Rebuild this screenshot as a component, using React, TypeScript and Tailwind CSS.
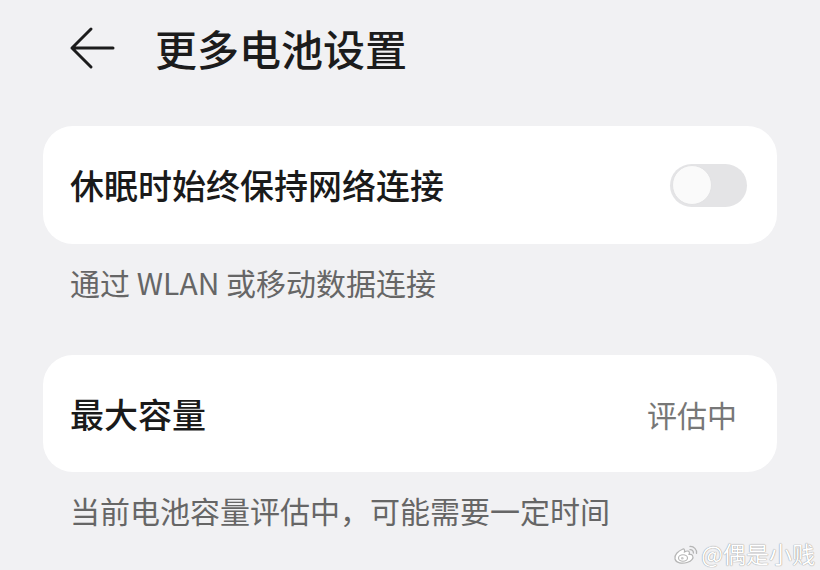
import React from "react";

function BackArrow() {
  return (
    <svg width="46" height="44" viewBox="0 0 46 44" fill="none">
      <path d="M3 22H44M3 22L22 3M3 22L22 41" stroke="#1c1c1c" strokeWidth="3" strokeLinecap="round" strokeLinejoin="round" />
    </svg>
  );
}

function Toggle() {
  return (
    <div className="w-[77px] h-[43px] rounded-full bg-[#e4e4e6] flex items-center px-[1.5px]">
      <div className="w-[40px] h-[40px] rounded-full bg-[#fafafa] border-[1.5px] border-[#e2e2e4]" />
    </div>
  );
}

function WeiboLogo() {
  return (
    <svg width="26" height="22" viewBox="0 0 26 22" fill="none">
      <path d="M10 6C5 8 1 12 2 16c1 4 7 5 12 3.5S21 15 19.5 12.5C18.5 11 16.5 11.5 16 11.5c.8-1.8.5-3.5-1.5-3.5-1.2 0-2.5.6-3 .9.3-1.6-.2-3.4-1.5-2.9Z" fill="#fff" stroke="#b5b5b5" strokeWidth="1.2" />
      <ellipse cx="10" cy="15" rx="4.5" ry="3.3" fill="#fff" stroke="#b5b5b5" strokeWidth="1.1" />
      <circle cx="9.3" cy="15.3" r="1.3" fill="#c8c8c8" />
      <path d="M17 3.5a6 6 0 0 1 6.5 6.8M17 6.6a3 3 0 0 1 3.4 3.4" stroke="#b5b5b5" strokeWidth="1.3" strokeLinecap="round" />
    </svg>
  );
}

export default function App() {
  return (
    <div
      className="relative w-[820px] h-[570px] overflow-hidden bg-[#f1f1f3]"
      style={{ fontFamily: '"Noto Sans CJK SC", "Noto Sans", sans-serif' }}
    >
      <div className="flex items-center h-[96px] pl-[69px]">
        <BackArrow />
        <div className="ml-[40px] text-[42px] leading-none font-medium text-[#1c1c1c]">更多电池设置</div>
      </div>

      <div className="mt-[30px] mx-[43px] h-[118px] rounded-[30px] bg-white flex items-center justify-between pl-[27px] pr-[30px]">
        <div className="text-[34px] leading-none font-medium text-[#1a1a1a]">休眠时始终保持网络连接</div>
        <Toggle />
      </div>

      <div className="pl-[70px] pt-[18px] h-[111px]">
        <div className="text-[30px] leading-[40px] text-[#666666]">通过 WLAN 或移动数据连接</div>
      </div>

      <div className="mx-[43px] h-[117px] rounded-[30px] bg-white flex items-center justify-between pl-[27px] pr-[40px]">
        <div className="text-[34px] leading-none font-medium text-[#1a1a1a]">最大容量</div>
        <div className="text-[30px] leading-none text-[#777777]">评估中</div>
      </div>

      <div className="pl-[70px] pt-[18px]">
        <div className="text-[30px] leading-[40px] text-[#666666]">当前电池容量评估中，可能需要一定时间</div>
      </div>

      <div className="absolute right-[5px] bottom-[5px] flex items-center gap-[2px]">
        <WeiboLogo />
        <span className="text-[23px] leading-none text-white [text-shadow:0_0_1px_#9a9a9a,0_0_1px_#9a9a9a]">@偶是小贱</span>
      </div>
    </div>
  );
}
